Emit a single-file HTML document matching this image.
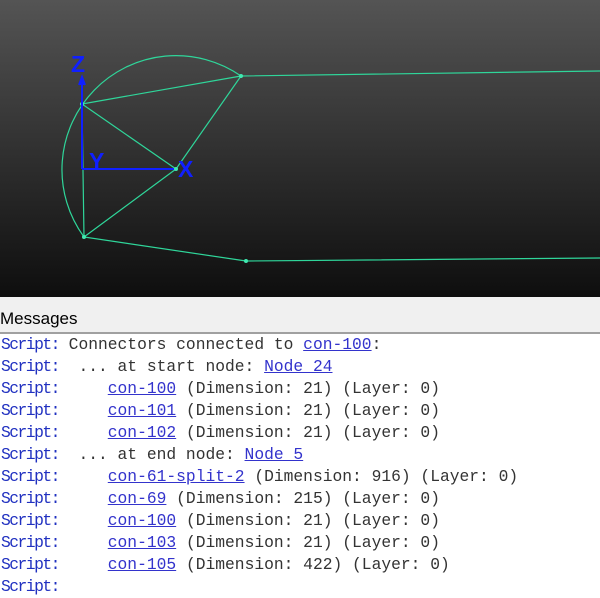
<!DOCTYPE html>
<html><head><style>
body{margin:0;width:600px;height:584px;overflow:hidden;background:#fff;}
#v{position:absolute;left:0;top:0;width:600px;height:297px;background:linear-gradient(#545454,#0e0e0e);}
#h{position:absolute;left:0;top:297px;width:600px;height:35px;background:#f0f0f0;border-bottom:2px solid #a0a0a0;}
#h span{position:absolute;left:0;top:12px;font:17px "Liberation Sans",sans-serif;color:#000;}
#m{position:absolute;left:1px;top:334px;font:16.3px/22px "Liberation Mono",monospace;color:#333;white-space:pre;}
#m div{height:22px;line-height:22px}
.s{color:#2030c0;letter-spacing:-1.5px}
a{color:#3333cc;text-decoration:underline}
</style></head><body>
<div id="v"><svg width="600" height="297">
<g stroke="#2fd69a" stroke-width="1.2" fill="none">
<path d="M241,76 A114,114 0 0 0 84,237"/>
<path d="M241,76 L600,71 M241,76 L82,104 M241,76 L176,169 M82,104 L176,169 M176,169 L84,237 M82,104 L84,237 L246,261 L600,258"/>
</g>
<g fill="#3fe8b0"><circle cx="241" cy="76" r="2"/><circle cx="82" cy="104" r="2"/><circle cx="84" cy="237" r="2"/><circle cx="246" cy="261" r="2"/><circle cx="176" cy="169" r="2"/></g>
<g stroke="#1020ff" stroke-width="2" fill="none"><path d="M82,169 L82,80 M82,169 L174,169"/><path d="M79,85 L82,77 L85,85" fill="#1020ff"/></g>
<g fill="#1020ff" font-family="Liberation Sans,sans-serif" font-weight="bold" font-size="23"><text x="71" y="72">Z</text><text x="89" y="169">Y</text><text x="178" y="177">X</text></g>
</svg></div>
<div id="h"><span>Messages</span></div>
<div id="m"><div><span class="s">Script:</span> Connectors connected to <a>con-100</a>:</div><div><span class="s">Script:</span>  ... at start node: <a>Node_24</a></div><div><span class="s">Script:</span>     <a>con-100</a> (Dimension: 21) (Layer: 0)</div><div><span class="s">Script:</span>     <a>con-101</a> (Dimension: 21) (Layer: 0)</div><div><span class="s">Script:</span>     <a>con-102</a> (Dimension: 21) (Layer: 0)</div><div><span class="s">Script:</span>  ... at end node: <a>Node_5</a></div><div><span class="s">Script:</span>     <a>con-61-split-2</a> (Dimension: 916) (Layer: 0)</div><div><span class="s">Script:</span>     <a>con-69</a> (Dimension: 215) (Layer: 0)</div><div><span class="s">Script:</span>     <a>con-100</a> (Dimension: 21) (Layer: 0)</div><div><span class="s">Script:</span>     <a>con-103</a> (Dimension: 21) (Layer: 0)</div><div><span class="s">Script:</span>     <a>con-105</a> (Dimension: 422) (Layer: 0)</div><div><span class="s">Script:</span></div></div>
</body></html>
